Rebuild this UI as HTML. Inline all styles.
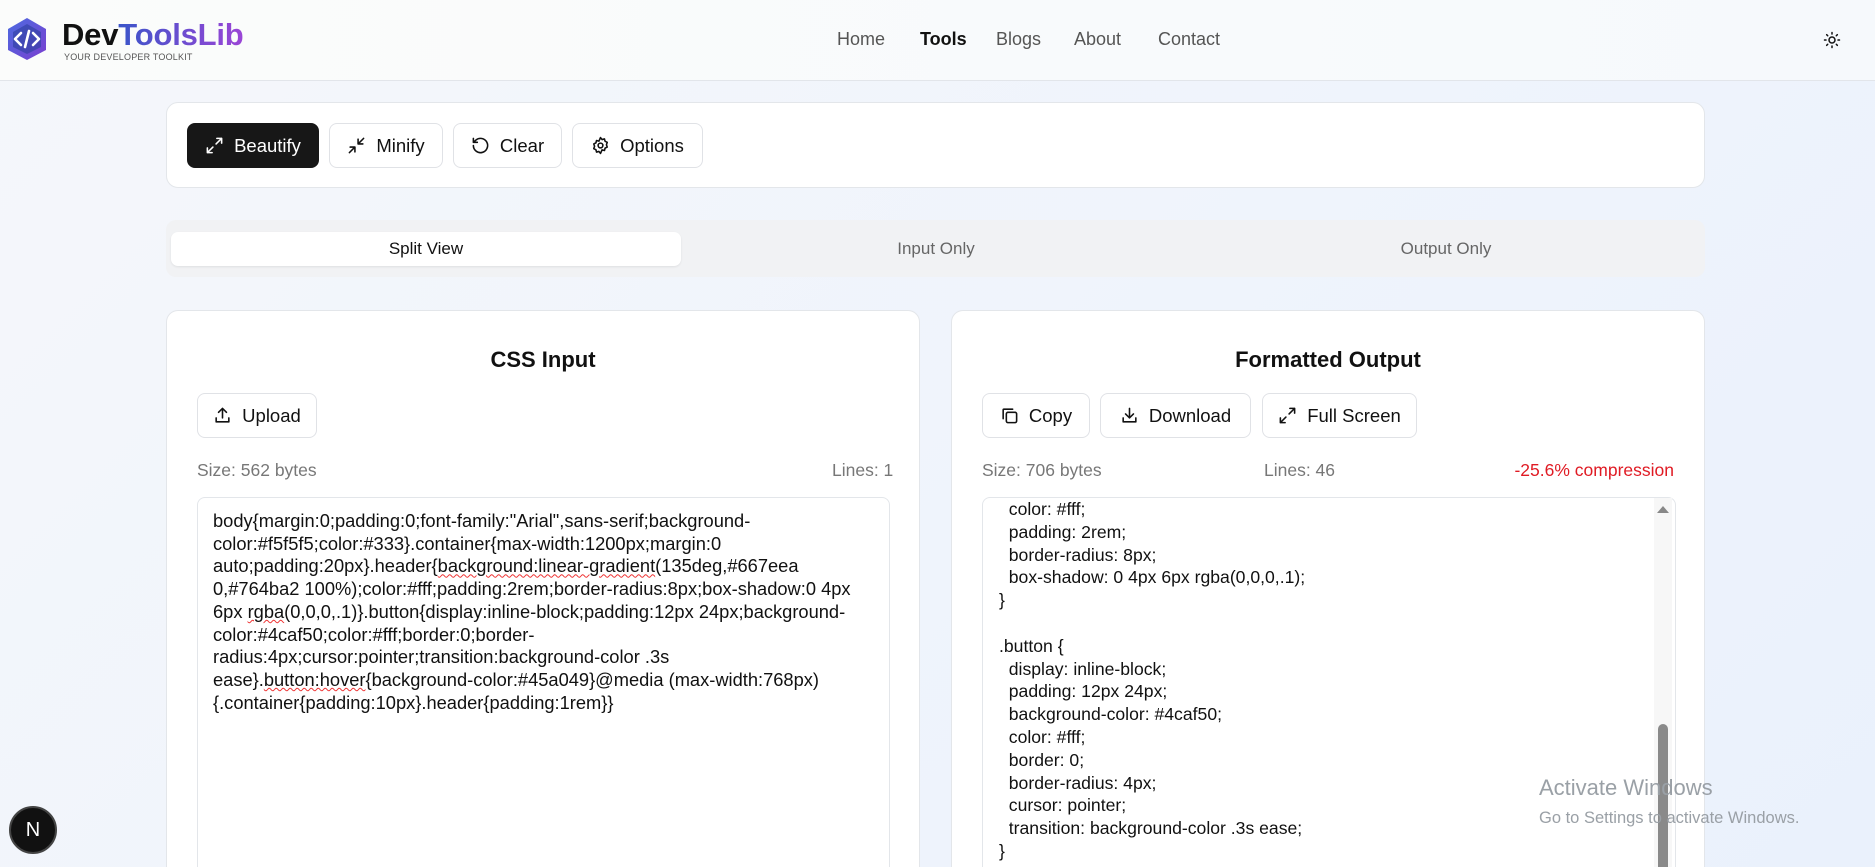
<!DOCTYPE html>
<html style="height:867px;overflow:hidden"><head><meta charset="utf-8"><style>
*{box-sizing:border-box;margin:0;padding:0}
body{width:1875px;height:867px;overflow:hidden;font-family:"Liberation Sans",sans-serif;background:linear-gradient(135deg,#f5f7fb,#eaf1fc);position:relative;color:#111}
.hdr{position:absolute;left:0;top:0;width:1875px;height:81px;background:linear-gradient(90deg,#fbfcfb,#f6f9fc);border-bottom:1px solid #e2e5ea}
.logo{position:absolute;left:6px;top:17px}
.brand{position:absolute;left:62px;top:17px;font-size:31px;font-weight:bold;letter-spacing:-0.2px}
.brand span{background:linear-gradient(90deg,#3a55c9,#9b45d6);-webkit-background-clip:text;color:transparent}
.sub{position:absolute;left:64px;top:52px;font-size:9px;color:#555;letter-spacing:.2px}
.nav{position:absolute;top:29px;font-size:18px;color:#555}
.card{position:absolute;background:#fff;border:1px solid #e3e6ea;border-radius:12px}
.btn{position:absolute;height:45px;border:1px solid #e0e2e6;border-radius:8px;background:#fff;font-size:18.5px;display:flex;align-items:center;justify-content:center;gap:10px;color:#111}
.btn svg{width:19px;height:19px;fill:none;stroke:currentColor;stroke-width:2;stroke-linecap:round;stroke-linejoin:round}
.tabs{position:absolute;left:166px;top:220px;width:1539px;height:57px;background:#f1f2f4;border-radius:10px}
.tab{position:absolute;top:12px;height:34px;line-height:34px;text-align:center;font-size:17px;color:#666}
.ttl{position:absolute;width:100%;text-align:center;top:36px;font-size:22px;font-weight:bold}
.meta{position:absolute;top:460px;font-size:17.5px;color:#777}
.ta{position:absolute;border:1px solid #e3e6ea;border-radius:8px;background:#fff;font-size:18.3px;line-height:22.7px;color:#111;white-space:pre;overflow:hidden}
.sq{text-decoration:underline wavy #e33;text-decoration-thickness:1px}
</style></head><body>
<div class="hdr">
<svg class="logo" width="42" height="44" viewBox="0 0 42 44"><defs><linearGradient id="g" x1="0" y1="0" x2="1" y2="1"><stop offset="0" stop-color="#4b6be0"/><stop offset="1" stop-color="#7a3fd0"/></linearGradient></defs><polygon points="21,1 40,12 40,33 21,43 2,33 2,12" fill="url(#g)"/><polygon points="21,7 35,15 35,30 21,37 7,30 7,15" fill="#2c3f9e" opacity=".6"/><path d="M15 16l-6 6 6 6M27 16l6 6-6 6M23 14l-4 16" stroke="#fff" stroke-width="2.6" fill="none" stroke-linecap="round" stroke-linejoin="round"/></svg>
<div class="brand">Dev<span>ToolsLib</span></div>
<div class="sub">YOUR DEVELOPER TOOLKIT</div>
<div class="nav" style="left:837px">Home</div>
<div class="nav" style="left:920px;color:#111;font-weight:bold">Tools</div>
<div class="nav" style="left:996px">Blogs</div>
<div class="nav" style="left:1074px">About</div>
<div class="nav" style="left:1158px">Contact</div>
<svg style="position:absolute;left:1823px;top:31px" width="18" height="18" viewBox="0 0 24 24" fill="none" stroke="#111" stroke-width="2" stroke-linecap="round"><circle cx="12" cy="12" r="4"/><path d="M12 2v2M12 20v2M4.9 4.9l1.4 1.4M17.7 17.7l1.4 1.4M2 12h2M20 12h2M4.9 19.1l1.4-1.4M17.7 6.3l1.4-1.4"/></svg>
</div>

<div class="card" style="left:166px;top:102px;width:1539px;height:86px"></div>
<div class="btn" style="left:187px;top:123px;width:132px;background:#171717;color:#fff;border-color:#171717"><svg viewBox="0 0 24 24"><path d="M15 3h6v6M21 3l-7 7M9 21H3v-6M3 21l7-7"/></svg>Beautify</div>
<div class="btn" style="left:329px;top:123px;width:114px"><svg viewBox="0 0 24 24"><path d="M4 14h6v6M10 14l-7 7M20 10h-6V4M14 10l7-7"/></svg>Minify</div>
<div class="btn" style="left:453px;top:123px;width:109px"><svg viewBox="0 0 24 24"><path d="M3 12a9 9 0 1 0 3-6.7L3 8M3 3v5h5"/></svg>Clear</div>
<div class="btn" style="left:572px;top:123px;width:131px"><svg viewBox="0 0 24 24"><circle cx="12" cy="12" r="3"/><path d="M12 2l2 2.5 3-.8.8 3L20.5 8l-1 3 1 3-2.7 1.3-.8 3-3-.8L12 22l-2-2.5-3 .8-.8-3L3.5 16l1-3-1-3 2.7-1.3.8-3 3 .8z"/></svg>Options</div>

<div class="tabs">
<div class="tab" style="left:5px;width:510px;background:#fff;border-radius:7px;color:#111;box-shadow:0 1px 2px rgba(0,0,0,.08)">Split View</div>
<div class="tab" style="left:515px;width:510px">Input Only</div>
<div class="tab" style="left:1025px;width:510px">Output Only</div>
</div>

<div class="card" style="left:166px;top:310px;width:754px;height:557px;border-bottom:none;border-radius:12px 12px 0 0">
<div class="ttl">CSS Input</div></div>
<div class="btn" style="left:197px;top:393px;width:120px"><svg viewBox="0 0 24 24"><path d="M12 15V3M7 8l5-5 5 5M4 15v5h16v-5"/></svg>Upload</div>
<div class="meta" style="left:197px">Size: 562 bytes</div>
<div class="meta" style="left:832px">Lines: 1</div>
<div class="ta" style="left:197px;top:497px;width:693px;height:370px;padding:12px 15px;border-bottom:none;border-radius:8px 8px 0 0">body{margin:0;padding:0;font-family:"Arial",sans-serif;background-
color:#f5f5f5;color:#333}.container{max-width:1200px;margin:0
auto;padding:20px}.header{<span class="sq">background:linear-gradient</span>(135deg,#667eea
0,#764ba2 100%);color:#fff;padding:2rem;border-radius:8px;box-shadow:0 4px
6px <span class="sq">rgba</span>(0,0,0,.1)}.button{display:inline-block;padding:12px 24px;background-
color:#4caf50;color:#fff;border:0;border-
radius:4px;cursor:pointer;transition:background-color .3s
ease}.<span class="sq">button:hover</span>{background-color:#45a049}@media (max-width:768px)
{.container{padding:10px}.header{padding:1rem}}</div>

<div class="card" style="left:951px;top:310px;width:754px;height:557px;border-bottom:none;border-radius:12px 12px 0 0">
<div class="ttl">Formatted Output</div></div>
<div class="btn" style="left:982px;top:393px;width:108px"><svg viewBox="0 0 24 24"><rect x="8" y="8" width="13" height="13" rx="2"/><path d="M4 16V5a1 1 0 0 1 1-1h11"/></svg>Copy</div>
<div class="btn" style="left:1100px;top:393px;width:151px"><svg viewBox="0 0 24 24"><path d="M12 3v12M7 10l5 5 5-5M4 15v5h16v-5"/></svg>Download</div>
<div class="btn" style="left:1262px;top:393px;width:155px"><svg viewBox="0 0 24 24"><path d="M15 3h6v6M21 3l-7 7M9 21H3v-6M3 21l7-7"/></svg>Full Screen</div>
<div class="meta" style="left:982px">Size: 706 bytes</div>
<div class="meta" style="left:1264px">Lines: 46</div>
<div class="meta" style="left:1474px;width:200px;text-align:right;color:#e01b24">-25.6% compression</div>
<div class="ta" style="left:982px;top:497px;width:694px;height:370px;padding:0 16px;line-height:22.8px;font-size:17.6px;border-bottom:none;border-radius:8px 8px 0 0">  color: #fff;
  padding: 2rem;
  border-radius: 8px;
  box-shadow: 0 4px 6px rgba(0,0,0,.1);
}

.button {
  display: inline-block;
  padding: 12px 24px;
  background-color: #4caf50;
  color: #fff;
  border: 0;
  border-radius: 4px;
  cursor: pointer;
  transition: background-color .3s ease;
}</div>
<div style="position:absolute;left:1654px;top:498px;width:18px;height:369px;background:#f7f7f7"></div>
<div style="position:absolute;left:1657px;top:506px;width:0;height:0;border-left:6px solid transparent;border-right:6px solid transparent;border-bottom:7px solid #888"></div>
<div style="position:absolute;left:1658px;top:724px;width:10px;height:143px;background:#8a8a8a;border-radius:5px 5px 0 0"></div>

<div style="position:absolute;left:1539px;top:775px;font-size:22px;color:#9aa0a6">Activate Windows</div>
<div style="position:absolute;left:1539px;top:809px;font-size:16.5px;color:#9aa0a6">Go to Settings to activate Windows.</div>
<div style="position:absolute;left:9px;top:806px;width:48px;height:48px;border-radius:50%;background:#111;border:2px solid #444;color:#fff;font-size:20px;text-align:center;line-height:44px">N</div>
</body></html>
